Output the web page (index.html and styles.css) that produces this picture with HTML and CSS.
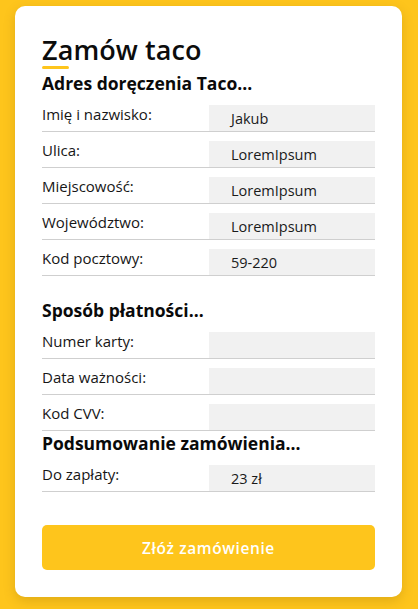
FILE: index.html
```html
<!DOCTYPE html>
<html lang="pl">
<head>
<meta charset="utf-8">
<title>Zamów taco</title>
<link rel="stylesheet" href="styles.css">
</head>
<body>
<main class="card">
  <h1 class="title">Zamów taco</h1>
  <div class="underline"></div>

  <section class="section section-address">
    <h2 class="heading">Adres doręczenia Taco...</h2>
    <div class="row"><span class="label">Imię i nazwisko:</span><span class="field">Jakub</span></div>
    <div class="row"><span class="label">Ulica:</span><span class="field">LoremIpsum</span></div>
    <div class="row"><span class="label">Miejscowość:</span><span class="field">LoremIpsum</span></div>
    <div class="row"><span class="label">Województwo:</span><span class="field">LoremIpsum</span></div>
    <div class="row"><span class="label">Kod pocztowy:</span><span class="field">59-220</span></div>
  </section>

  <section class="section section-payment">
    <h2 class="heading">Sposób płatności...</h2>
    <div class="row"><span class="label">Numer karty:</span><span class="field"></span></div>
    <div class="row"><span class="label">Data ważności:</span><span class="field"></span></div>
    <div class="row"><span class="label">Kod CVV:</span><span class="field"></span></div>
  </section>

  <section class="section section-summary">
    <h2 class="heading">Podsumowanie zamówienia...</h2>
    <div class="row"><span class="label">Do zapłaty:</span><span class="field">23 zł</span></div>
  </section>

  <button class="submit" type="button">Złóż zamówienie</button>
</main>
</body>
</html>
```

FILE: styles.css
```css
* { box-sizing: border-box; }

html, body {
  margin: 0;
  padding: 0;
}

body {
  background: #fec51c;
  font-family: "Open Sans", "Liberation Sans", sans-serif;
  color: #111;
  padding: 6px 16px 12px 15px;
  min-height: 609px;
}

.card {
  background: #fff;
  border-radius: 10px;
  box-shadow: 0 4px 12px rgba(120, 80, 0, 0.22);
  padding: 28px 27px 27px;
  height: 591px;
  display: flex;
  flex-direction: column;
}

.title {
  margin: 0;
  font-size: 27px;
  line-height: 32px;
  font-weight: 600;
  letter-spacing: 0.1px;
  color: #0c0c0c;
}

.underline {
  width: 27px;
  height: 3px;
  background: #fec51c;
  border-radius: 2px;
}

.heading {
  margin: 3px 0 11px;
  font-size: 17.5px;
  line-height: 22px;
  font-weight: 700;
  color: #0a0a0a;
}

.section-address { margin-bottom: 23px; }
.section-payment .heading { margin-top: 0; }
.section-summary .heading { margin-top: 1px; }

.row {
  display: grid;
  grid-template-columns: 167px 1fr;
  border-bottom: 1px solid #cfcfcf;
  margin-bottom: 9px;
}

.section .row:last-child { margin-bottom: 0; }

.label {
  font-size: 15px;
  line-height: 18px;
  color: #161616;
  align-self: start;
}

.field {
  display: block;
  height: 26px;
  background: #f1f1f1;
  padding-left: 22px;
  font-size: 14.5px;
  line-height: 26px;
  padding-top: 1px;
  color: #1a1a1a;
}

.submit {
  margin-top: 33px;
  height: 45px;
  width: 100%;
  border: none;
  border-radius: 5px;
  background: #fec51c;
  color: #fff;
  font-family: "Open Sans", "Liberation Sans", sans-serif;
  font-size: 15.5px;
  font-weight: 600;
  letter-spacing: 0.6px;
  padding: 0;
}
```
